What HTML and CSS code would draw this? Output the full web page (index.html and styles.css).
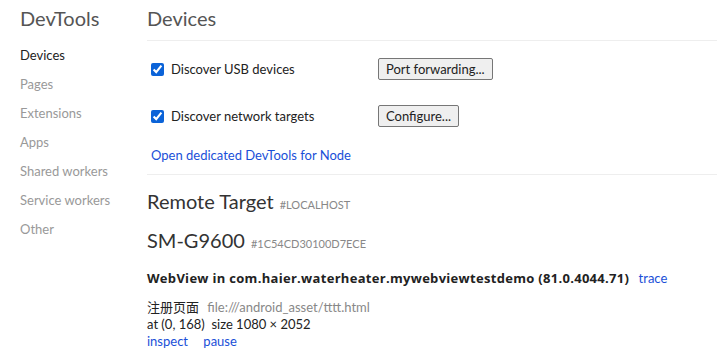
FILE: index.html
```html
<!DOCTYPE html>
<html lang="zh">
<head>
    <meta charset="UTF-8">
    <title>Inspect with Chrome Developer Tools</title>
    <link rel="stylesheet" href="styles.css">
</head>
<body>
    <div class="navigation">
        <div class="logo">DevTools</div>
        <div class="nav-item selected">Devices</div>
        <div class="nav-item">Pages</div>
        <div class="nav-item">Extensions</div>
        <div class="nav-item">Apps</div>
        <div class="nav-item">Shared workers</div>
        <div class="nav-item">Service workers</div>
        <div class="nav-item">Other</div>
    </div>

    <div class="content">
        <div class="content-header">Devices</div>

        <div class="device-options">
            <div class="option-row">
                <label class="option-label">
                    <input type="checkbox" checked>
                    <span>Discover USB devices</span>
                </label>
                <button class="option-button">Port forwarding...</button>
            </div>
            <div class="option-row">
                <label class="option-label">
                    <input type="checkbox" checked>
                    <span>Discover network targets</span>
                </label>
                <button class="option-button">Configure...</button>
            </div>
            <div class="node-link"><a href="#">Open dedicated DevTools for Node</a></div>
        </div>

        <div class="device-header">
            <span class="device-name">Remote Target</span>
            <span class="device-serial">#LOCALHOST</span>
        </div>

        <div class="device-header">
            <span class="device-name">SM-G9600</span>
            <span class="device-serial">#1C54CD30100D7ECE</span>
        </div>

        <div class="browser-header">
            <span class="browser-name">WebView in com.haier.waterheater.mywebviewtestdemo (81.0.4044.71)</span>
            <a href="#" class="action">trace</a>
        </div>

        <div class="row">
            <div class="properties-box">
                <span class="name">注册页面</span>
                <span class="url">file:///android_asset/tttt.html</span>
            </div>
            <div class="webview-props">at (0, 168)&nbsp; size 1080 × 2052</div>
            <div class="actions">
                <a href="#" class="action">inspect</a>
                <a href="#" class="action">pause</a>
            </div>
        </div>
    </div>
</body>
</html>
```

FILE: styles.css
```css
* {
    box-sizing: border-box;
}

body {
    margin: 0;
    display: flex;
    font-family: "Segoe UI", Lato, "Noto Sans CJK SC", sans-serif;
    font-size: 13px;
    color: #222;
    background: #fff;
}

a {
    color: #1a4fd8;
    text-decoration: none;
}

/* sidebar */
.navigation {
    width: 147px;
    flex-shrink: 0;
    padding: 5px 0 0 20px;
}

.logo {
    font-size: 20px;
    color: #555;
    height: 36px;
    line-height: 26px;
}

.nav-item {
    color: #999;
    height: 29px;
    line-height: 29px;
}

.nav-item.selected {
    color: #222;
}

/* main */
.content {
    flex: 1;
    min-width: 0;
    padding-top: 5px;
}

.content-header {
    font-size: 20px;
    color: #555;
    line-height: 26px;
    padding-bottom: 9px;
    border-bottom: 1px solid #eee;
}

.device-options {
    padding: 16px 0 10px 4px;
    border-bottom: 1px solid #eee;
}

.option-row {
    display: flex;
    align-items: center;
    height: 24px;
    margin-bottom: 23px;
}

.option-row:nth-child(2) {
    margin-bottom: 18px;
}

.option-label {
    display: flex;
    align-items: center;
    width: 227px;
}

.option-label input {
    width: 13px;
    height: 13px;
    margin: 0 7px 0 0;
    accent-color: #0b63d8;
}

.option-button {
    font-family: inherit;
    font-size: 13px;
    color: #222;
    background: #efefef;
    border: 1px solid #767676;
    border-radius: 2px;
    height: 22px;
    padding: 0 7px;
}

.node-link {
    line-height: 18px;
}

.device-header {
    display: flex;
    align-items: baseline;
    margin-top: 14px;
    height: 27px;
}

.device-header + .device-header {
    margin-top: 12px;
}

.device-name {
    font-size: 20px;
    color: #333;
    margin-right: 6px;
}

.device-serial {
    font-size: 11px;
    color: #888;
}

.browser-header {
    margin-top: 14px;
    line-height: 18px;
}

.browser-name {
    font-family: "Open Sans", sans-serif;
    font-size: 13px;
    font-weight: bold;
    letter-spacing: 0.3px;
    color: #222;
    margin-right: 6px;
}

.row {
    margin-top: 12px;
    line-height: 17px;
}

.properties-box .name {
    margin-right: 5px;
}

.url {
    color: #888;
}

.actions .action {
    margin-right: 12px;
}
```
